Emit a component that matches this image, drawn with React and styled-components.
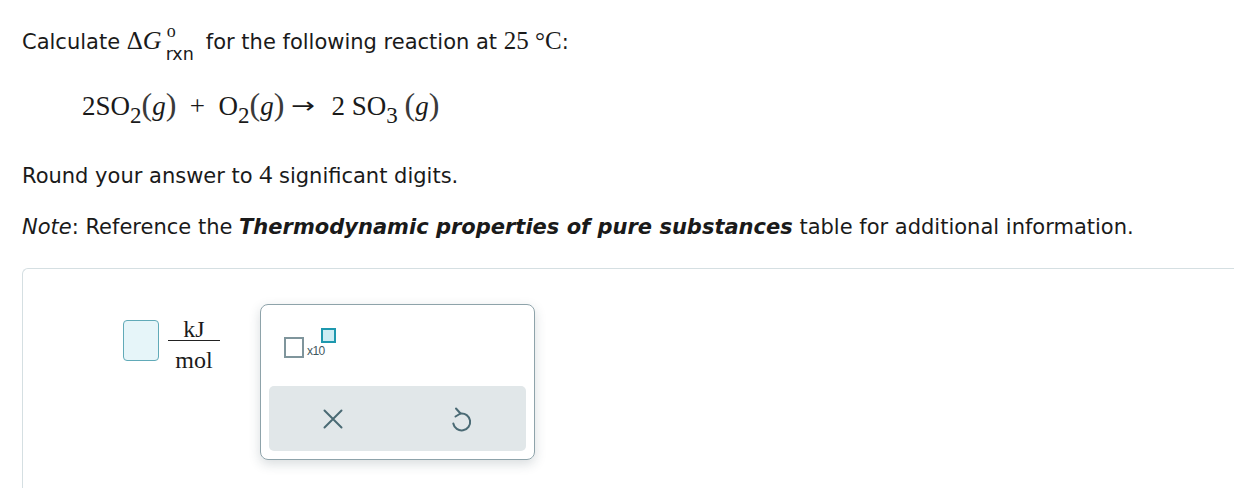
import React from "react";
import styled, { createGlobalStyle } from "styled-components";

const Global = createGlobalStyle`
  html, body { margin: 0; padding: 0; background: #fff; }
  body { font-family: "DejaVu Sans", Verdana, sans-serif; color: #1a1a1a; }
`;

const Page = styled.div`
  padding: 24px 0 0 22px;
  width: 1212px;
  height: 464px;
  overflow: hidden;
`;

const Para = styled.p`
  margin: ${(p) => p.$m || "0"};
  font-size: 21px;
  line-height: 28px;
  white-space: nowrap;
`;

const MathText = styled.span`
  font-family: "Liberation Serif", "Times New Roman", serif;
  font-size: ${(p) => p.$size || "24px"};
  font-style: ${(p) => (p.$italic ? "italic" : "normal")};
  line-height: 1;
`;

const Scripts = styled.span`
  display: inline-flex;
  flex-direction: column;
  align-items: flex-start;
  vertical-align: 12px;
  line-height: 1;
  margin: 0 12px 0 4px;
`;

const SupO = styled.span`
  font-family: "Liberation Serif", serif;
  font-size: 18px;
  line-height: 14px;
  margin-left: 1px;
`;

const SubRxn = styled.span`
  font-size: 17.5px;
  line-height: 16px;
  margin-top: 8px;
`;

const Equation = styled.div`
  margin: 24px 0 0 60px;
  font-family: "Liberation Serif", "Times New Roman", serif;
  font-size: 27px;
  height: 40px;
  line-height: 40px;
  white-space: pre;
`;

const ChemSub = styled.span`
  font-size: 23px;
  vertical-align: -8px;
  line-height: 0;
`;

const Paren = styled.span`
  font-size: 32px;
  color: #3a3a3a;
  line-height: 1;
`;

const Arrow = styled.span`
  display: inline-block;
  font-family: "DejaVu Sans", sans-serif;
  font-size: 22px;
  line-height: 1;
  margin: 0 12px 0 10px;
  transform: scaleX(1.3);
  position: relative;
  top: -2px;
`;

const Panel = styled.div`
  margin-top: 27px;
  border-top: 1px solid #d5dfe2;
  border-left: 1px solid #d5dfe2;
  border-top-left-radius: 6px;
  height: 240px;
  display: flex;
  align-items: flex-start;
  padding: 35px 0 0 100px;
  box-sizing: border-box;
`;

const AnswerRow = styled.div`
  display: flex;
  align-items: flex-start;
  margin-top: 16px;
`;

const InputBox = styled.div`
  width: 34px;
  height: 39px;
  border: 1.5px solid #61aab8;
  background: #e6f5f9;
  border-radius: 4px;
`;

const Fraction = styled.div`
  display: flex;
  flex-direction: column;
  align-items: center;
  margin: -2px 0 0 9px;
  font-family: "Liberation Serif", "Times New Roman", serif;
  font-size: 24px;
`;

const Num = styled.span`
  line-height: 22px;
  border-bottom: 1.5px solid #222;
  width: 52px;
  text-align: center;
`;

const Den = styled.span`
  line-height: 26px;
  padding-top: 6px;
`;

const Popup = styled.div`
  margin-left: 40px;
  width: 275px;
  height: 156px;
  border: 1px solid #8ea3aa;
  border-radius: 8px;
  box-shadow: 0 4px 12px rgba(40, 60, 70, 0.18);
  box-sizing: border-box;
  padding: 0 8px 8px;
  display: flex;
  flex-direction: column;
`;

const Tools = styled.div`
  height: 81px;
  flex: none;
  display: flex;
  align-items: flex-start;
  padding: 23px 0 0 15px;
  box-sizing: border-box;
`;

const SciBase = styled.div`
  width: 16px;
  height: 17px;
  border: 2px solid #7f959c;
  margin-top: 9px;
`;

const X10 = styled.span`
  font-family: "Liberation Sans", Arial, sans-serif;
  font-size: 12px;
  color: #3f5860;
  margin-top: 16px;
  margin-left: 3px;
  letter-spacing: -0.6px;
`;

const SciExp = styled.div`
  width: 11px;
  height: 11px;
  border: 2px solid #1e98ae;
  background: #cdedf4;
  margin-left: -4px;
`;

const Buttons = styled.div`
  flex: 1;
  background: #e1e7e9;
  border-radius: 5px;
  display: flex;
  align-items: center;
  justify-content: space-around;
`;

const IconBtn = styled.button`
  background: none;
  border: 0;
  padding: 0;
  width: 30px;
  height: 30px;
  display: flex;
  align-items: center;
  justify-content: center;
  color: #4a6a74;
`;

export default function App() {
  return (
    <>
      <Global />
      <Page>
        <Para>
          Calculate <MathText $size="25px">Δ</MathText>
          <MathText $size="26px" $italic>G</MathText>
          <Scripts>
            <SupO>o</SupO>
            <SubRxn>rxn</SubRxn>
          </Scripts>
          for the following reaction at <MathText $size="25px">25 °C</MathText>:
        </Para>
        <Equation>
          2SO<ChemSub>2</ChemSub>
          <Paren>(</Paren><MathText $size="27px" $italic>g</MathText><Paren>)</Paren>
          {"  +  "}O<ChemSub>2</ChemSub>
          <Paren>(</Paren><MathText $size="27px" $italic>g</MathText><Paren>)</Paren>
          <Arrow>→</Arrow>
          {" 2 SO"}<ChemSub>3</ChemSub>
          {" "}<Paren>(</Paren><MathText $size="27px" $italic>g</MathText><Paren>)</Paren>
        </Equation>
        <Para $m="36px 0 0 0">
          Round your answer to <MathText $size="26px">4</MathText> significant digits.
        </Para>
        <Para $m="23px 0 0 0">
          <i>Note</i>: Reference the <b><i>Thermodynamic properties of pure substances</i></b> table for additional information.
        </Para>
        <Panel>
          <AnswerRow>
            <InputBox />
            <Fraction>
              <Num>kJ</Num>
              <Den>mol</Den>
            </Fraction>
          </AnswerRow>
          <Popup>
            <Tools>
              <SciBase />
              <X10>x10</X10>
              <SciExp />
            </Tools>
            <Buttons>
              <IconBtn aria-label="clear">
                <svg width="20" height="20" viewBox="0 0 20 20" fill="none" stroke="currentColor" strokeWidth="2" strokeLinecap="round">
                  <path d="M1.5 1.5 L18.5 18.5 M18.5 1.5 L1.5 18.5" />
                </svg>
              </IconBtn>
              <IconBtn aria-label="undo">
                <svg width="20" height="26" viewBox="0 0 20 26" fill="none" stroke="currentColor" strokeWidth="2" strokeLinecap="round" strokeLinejoin="round">
                  <path d="M8.5 7.5 A8.5 8.5 0 1 1 1.3 17.5" />
                  <path d="M4 2.5 L8.5 7.5 L3.5 10.5" />
                </svg>
              </IconBtn>
            </Buttons>
          </Popup>
        </Panel>
      </Page>
    </>
  );
}
